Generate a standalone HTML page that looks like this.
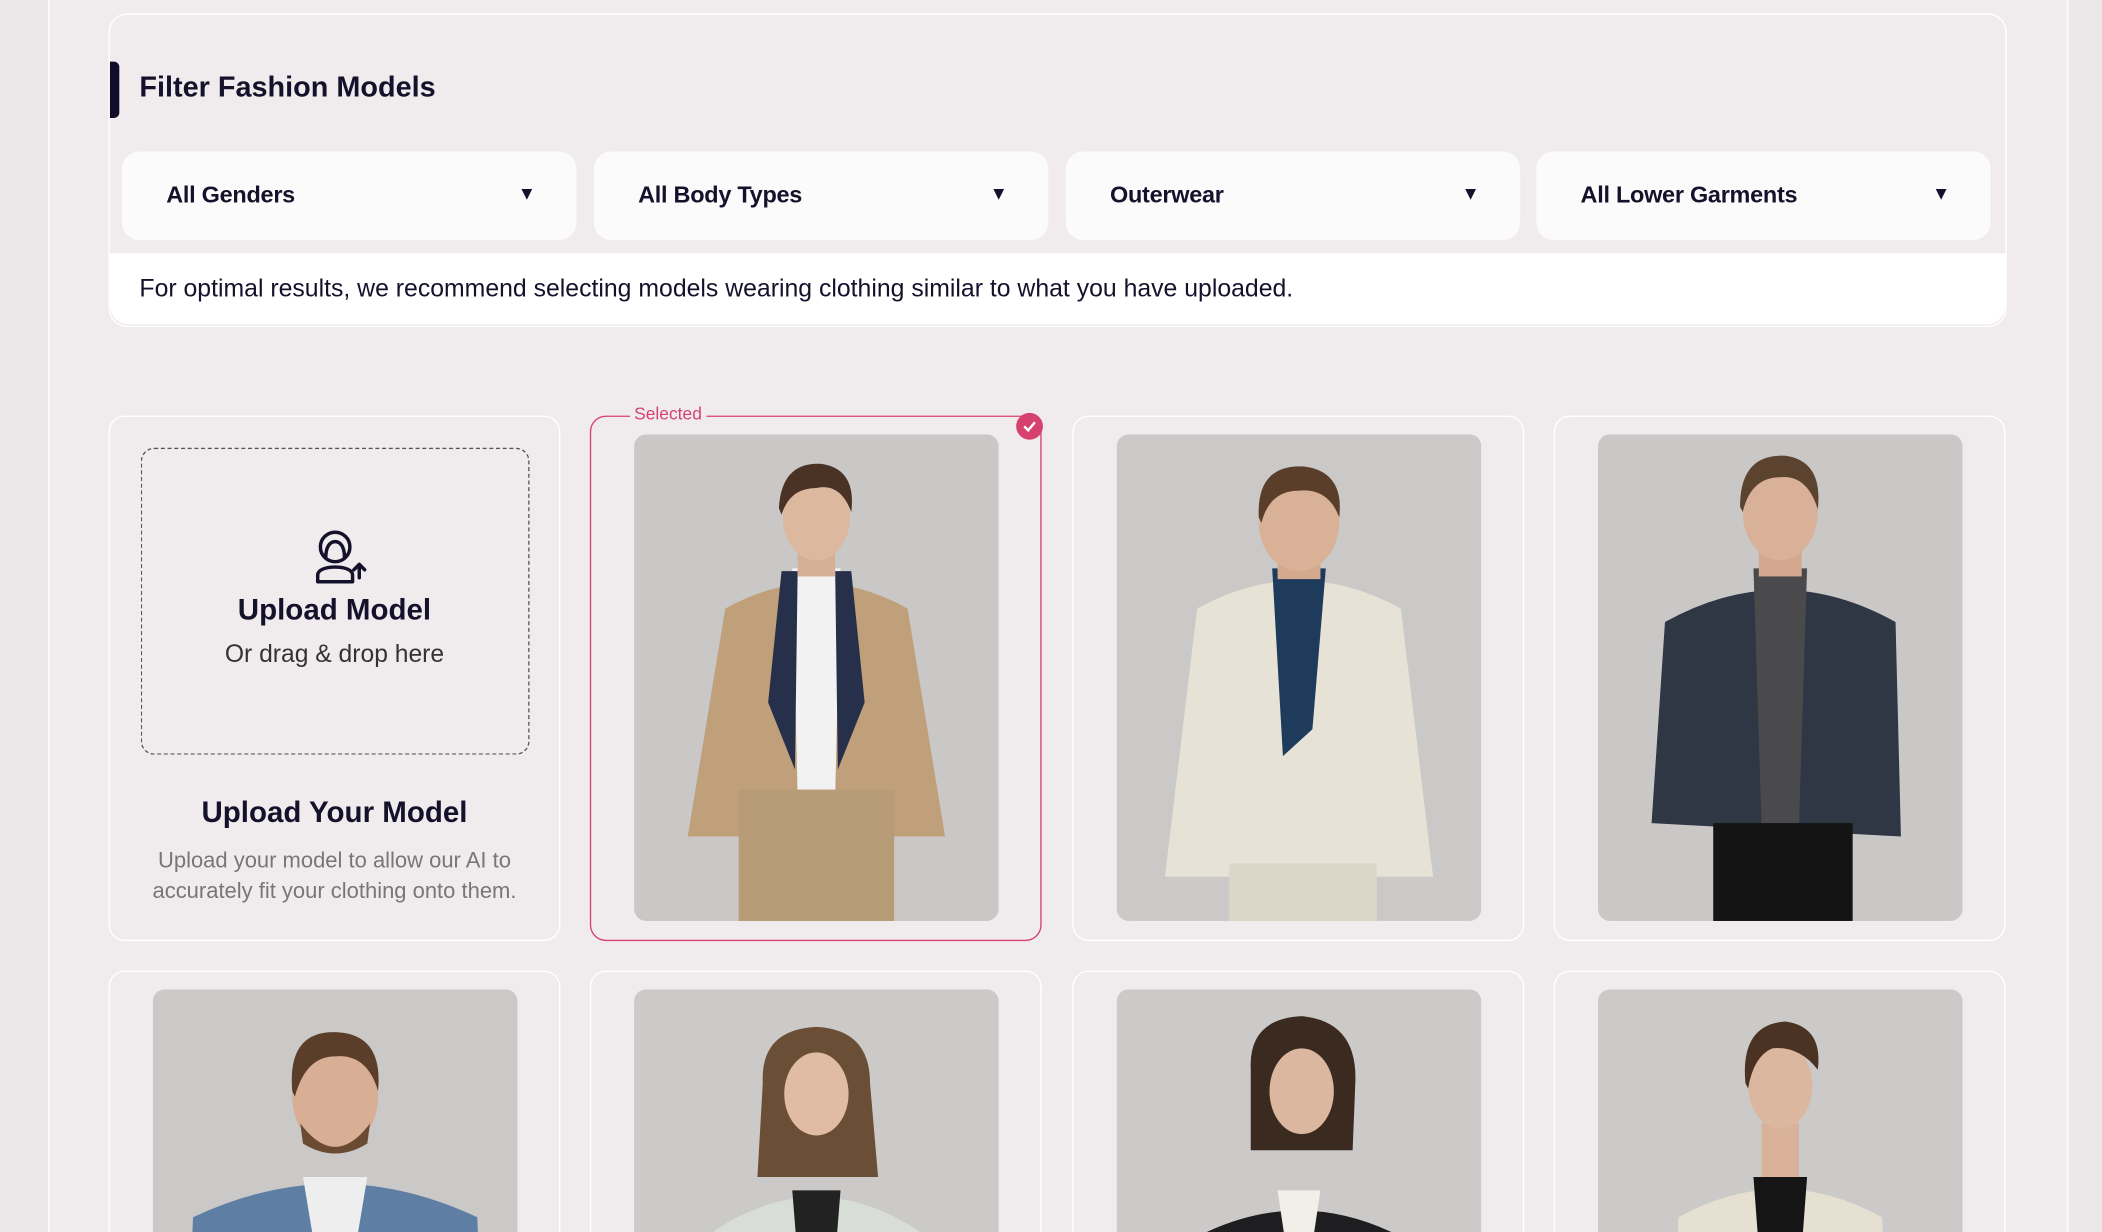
<!DOCTYPE html>
<html><head><meta charset="utf-8"><style>
html,body{margin:0;padding:0;width:2102px;height:1232px;overflow:hidden;background:#ece8e9;}
#s{position:absolute;left:0;top:0;width:1568px;height:919px;overflow:hidden;transform:scale(1.34056);transform-origin:0 0;font-family:"Liberation Sans",sans-serif;color:#14112b;}
.main{position:absolute;left:36px;top:0;width:1505px;height:919px;background:#f0ecee;border-left:1px solid #fff;border-right:1px solid #fff;}
.fc{position:absolute;left:81px;top:10px;width:1414px;height:232px;border:1px solid #fff;border-radius:14px;background:#f0ecee;overflow:hidden;}
.bar{position:absolute;left:82px;top:46px;width:7px;height:42px;background:#110c2a;border-radius:0 4px 4px 0;}
.title{position:absolute;left:104px;top:53px;font-size:21.5px;font-weight:bold;letter-spacing:0px;}
.dd{position:absolute;top:113px;width:339px;height:66px;background:#fbfbfb;border-radius:13px;}
.dd span{position:absolute;left:33px;top:22px;font-size:17.5px;font-weight:bold;letter-spacing:-0.2px;}
.dd i{position:absolute;right:33px;top:28px;width:0;height:0;border-left:4px solid transparent;border-right:4px solid transparent;border-top:8px solid #14112b;}
.note{position:absolute;left:82px;top:189px;width:1414px;height:53px;background:#fff;border-radius:0 0 14px 14px;}
.note span{position:absolute;left:22px;top:15px;font-size:18.5px;}
.card{position:absolute;width:335px;height:390px;border:1px solid #fff;border-radius:12px;background:#f0ecee;overflow:hidden;}
.card svg.ph{position:absolute;left:32px;top:13px;border-radius:9px;}
</style></head><body><div id="s">
<div class="main"></div>
<div class="fc"></div>
<div class="bar"></div>
<div class="title">Filter Fashion Models</div>
<div class="dd" style="left:91px"><span>All Genders</span><i></i></div>
<div class="dd" style="left:443px"><span>All Body Types</span><i></i></div>
<div class="dd" style="left:795px"><span>Outerwear</span><i></i></div>
<div class="dd" style="left:1146px"><span>All Lower Garments</span><i></i></div>
<div class="note"><span>For optimal results, we recommend selecting models wearing clothing similar to what you have uploaded.</span></div>

<div class="card" style="left:81px;top:310px;">
 <div style="position:absolute;left:23px;top:23px;width:288px;height:227px;border:1px dashed #555;border-radius:10px;"></div>
 <svg style="position:absolute;left:150px;top:83px" width="46" height="44" viewBox="0 0 46 44" fill="none" stroke="#14112b" stroke-width="2.6" stroke-linecap="round" stroke-linejoin="round">
  <circle cx="18" cy="14" r="11"/><path d="M11 22c0-8 3-12 7-12s7 4 7 12"/><path d="M5 40v-5c0-4 6-6 13-6s13 2 13 6v5z"/><path d="M36 37v-10M32 31l4-4 4 4"/></svg>
 <div style="position:absolute;left:0;width:335px;top:131px;text-align:center;font-size:22px;font-weight:bold;">Upload Model</div>
 <div style="position:absolute;left:0;width:335px;top:166px;text-align:center;font-size:18.4px;color:#333;">Or drag &amp; drop here</div>
 <div style="position:absolute;left:0;width:335px;top:282px;text-align:center;font-size:22px;font-weight:bold;">Upload Your Model</div>
 <div style="position:absolute;left:10px;width:315px;top:320px;text-align:center;font-size:16.4px;line-height:23px;color:#777;">Upload your model to allow our AI to accurately fit your clothing onto them.</div>
</div>

<div class="card" style="left:440px;top:310px;border-color:#d6416f;overflow:visible;">
 <svg class="ph" width="272" height="363" viewBox="0 0 272 363"><rect width="272" height="363" fill="#c9c8c6"/>
  <path d="M68 130 Q136 92 204 130 L232 300 L40 300Z" fill="#bfa07a"/><polygon points="118,100 154,100 150,270 122,270" fill="#f2f2f2"/><polygon points="110,102 122,102 120,250 100,200" fill="#27304a"/><polygon points="150,102 162,102 172,200 152,250" fill="#27304a"/><rect x="78" y="265" width="116" height="98" fill="#b89c78"/><rect x="122" y="82" width="28" height="24" fill="#d6b096"/><ellipse cx="136" cy="62" rx="25" ry="32" fill="#dcb89f"/><path d="M108 55 Q110 20 140 22 Q166 26 162 58 Q154 36 136 40 Q116 40 110 60Z" fill="#4a3324"/></svg>
 <div style="position:absolute;left:29px;top:-10px;padding:0 3px;background:#f0ecee;color:#d6416f;font-size:13px;">Selected</div>
 <div style="position:absolute;right:-2px;top:-3px;width:20px;height:20px;border-radius:50%;background:#d6416f;"><svg width="20" height="20" viewBox="0 0 20 20"><path d="M6 10l3 3 5-6" stroke="#fff" stroke-width="1.8" fill="none"/></svg></div>
</div>

<div class="card" style="left:800px;top:310px;">
 <svg class="ph" width="272" height="363" viewBox="0 0 272 363"><rect width="272" height="363" fill="#cac9c7"/>
  <path d="M60 130 Q136 88 212 130 L236 330 L36 330Z" fill="#e7e2d6"/><polygon points="116,100 156,100 146,220 124,240" fill="#1f3b5c"/><rect x="84" y="320" width="110" height="43" fill="#dcd6c8"/><rect x="120" y="88" width="32" height="20" fill="#d4a98e"/><ellipse cx="136" cy="66" rx="30" ry="36" fill="#d9b197"/><path d="M106 62 Q104 22 140 24 Q170 28 166 62 Q158 40 136 42 Q114 42 108 66Z" fill="#5a3e2a"/></svg>
</div>
<div class="card" style="left:1159px;top:310px;">
 <svg class="ph" width="272" height="363" viewBox="0 0 272 363"><rect width="272" height="363" fill="#c9c8c6"/>
  <path d="M50 140 Q136 92 222 140 L226 300 L40 290Z" fill="#2f3744"/><polygon points="116,100 156,100 150,290 122,290" fill="#4a4a4c"/><rect x="86" y="290" width="104" height="73" fill="#141414"/><rect x="120" y="82" width="32" height="24" fill="#d3a88e"/><ellipse cx="136" cy="58" rx="28" ry="36" fill="#d8b198"/><path d="M106 54 Q106 14 140 16 Q168 20 164 56 Q156 30 136 32 Q114 32 108 58Z" fill="#5c4330"/></svg>
</div>

<div class="card" style="left:81px;top:724px;">
 <svg class="ph" width="272" height="363" viewBox="0 0 272 363"><rect width="272" height="363" fill="#cac9c7"/>
  <path d="M30 170 Q136 120 242 170 L250 363 L22 363Z" fill="#5f7ea3"/><polygon points="112,140 160,140 150,200 122,200" fill="#eee"/><ellipse cx="136" cy="80" rx="32" ry="40" fill="#d8ae94"/><path d="M104 76 Q100 30 138 32 Q172 34 168 76 Q160 48 136 50 Q114 50 106 80Z" fill="#5a3e2a"/><path d="M110 100 Q136 135 162 100 L160 115 Q136 130 112 115Z" fill="#6b4a33"/></svg>
</div>
<div class="card" style="left:440px;top:724px;">
 <svg class="ph" width="272" height="363" viewBox="0 0 272 363"><rect width="272" height="363" fill="#cbcac8"/>
  <path d="M60 180 Q136 130 212 180 L220 363 L52 363Z" fill="#d9ddd8"/><polygon points="118,150 154,150 150,200 122,200" fill="#222"/><path d="M96 70 Q94 30 136 28 Q176 30 176 70 L182 140 L92 140Z" fill="#6b4e36"/><ellipse cx="136" cy="78" rx="24" ry="31" fill="#e0bca4"/></svg>
</div>
<div class="card" style="left:800px;top:724px;">
 <svg class="ph" width="272" height="363" viewBox="0 0 272 363"><rect width="272" height="363" fill="#cbcac8"/>
  <path d="M50 190 Q136 140 222 190 L230 363 L42 363Z" fill="#1e1e20"/><polygon points="120,150 152,150 146,190 126,190" fill="#f2eee8"/><path d="M100 60 Q98 22 138 20 Q180 24 178 70 L176 120 L100 120Z" fill="#3a2a20"/><ellipse cx="138" cy="76" rx="24" ry="32" fill="#dcb79f"/></svg>
</div>
<div class="card" style="left:1159px;top:724px;">
 <svg class="ph" width="272" height="363" viewBox="0 0 272 363"><rect width="272" height="363" fill="#cbcac8"/>
  <path d="M60 170 Q136 128 212 170 L218 363 L54 363Z" fill="#e6e0d2"/><polygon points="116,140 156,140 150,220 122,220" fill="#151515"/><rect x="122" y="100" width="28" height="40" fill="#d8b198"/><ellipse cx="136" cy="72" rx="24" ry="32" fill="#dcb79f"/><path d="M110 70 Q106 26 140 24 Q168 28 164 60 Q150 42 130 44 Q116 50 112 74Z" fill="#4a3322"/></svg>
</div>
</div></body></html>
